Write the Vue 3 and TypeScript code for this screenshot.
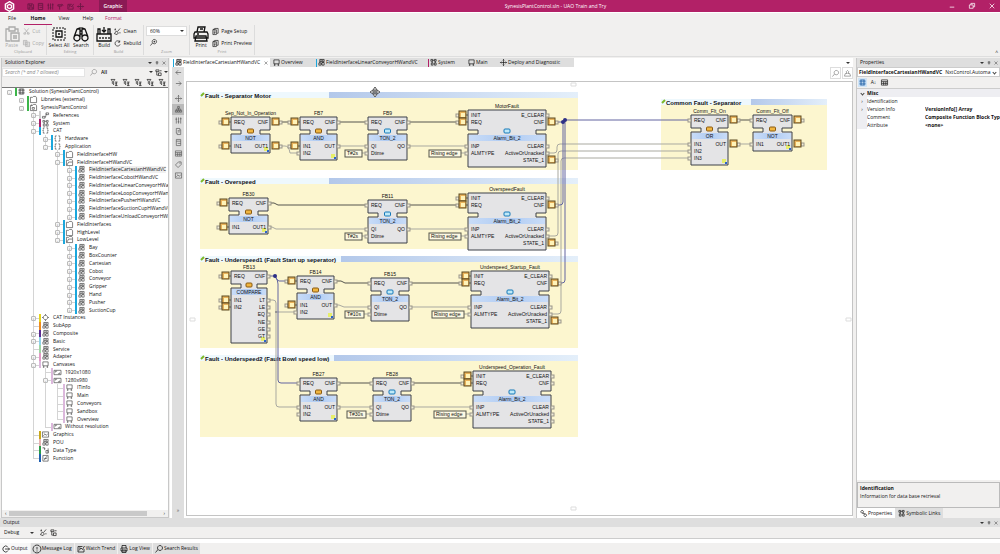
<script setup lang="ts">
import { h, ref } from 'vue'

const paths: Record<string, string> = {
  cut: 'M3 1l8 10M13 1L5 11M2 11h4v3H2zM10 11h4v3h-4z',
  copy: 'M1 1h8v10H1zM3 4h4M3 7h3M6 5h9v10H6zM8 9h5M8 12h5',
  broom: 'M14 1L8 8M5 7l5 4-3 4-6-2zM1 4h3M3 1v4M12 11h3',
  refresh: 'M13 4A6 6 0 1 0 14 10M13 1v4H9',
  zoom: 'M10 1a5 5 0 1 1-.1 0zM6 9l-5 6M8 6h4M10 4v4',
  search: 'M10 1a5 5 0 1 1-.1 0zM6 9l-5 6',
  page: 'M3 1h10v14H3zM3 5h10M6 10h7',
  pageSetup: 'M2 3h4V1h8v11h-3M2 4h8v11H2zM4 7h4M4 10h4M4 12h3',
  folder: 'M1 15V3h5l2-2h5l2 3v11z',
  folderOpen: 'M1 15V3h5l2-2h5l2 3v11zM2 14l4-7h8',
  solution: 'M3 2h10v12H3zM1 5h14M1 11h14M6 2v12M10 2v12',
  project: 'M1 15V3h5l2-2h5l2 3v11zM5 8h5v4H5zM4 1v4',
  link: 'M1 10h6v4H1zM9 2h6v4H9zM6 12c5 0 1-7 5-8',
  system: 'M2 1h4v4H2zM10 1h4v4h-4zM3 9h4v5H3zM10 9h4v5h-4zM6 3h4M5 5v4M12 5v4',
  cat: 'M6 2H3v4M10 2h3v4M3 10v4h3M13 10v4h-3M1 8h3M12 8h3',
  blocks: 'M4 1h10v5H4zM7 1v5M2 9h5v5H2zM9 8h5v6H9zM7 11h2M4 6v3M11 6v2M9 3h3',
  ring: 'M8 3a5 5 0 1 1-.1 0zM8 0v3M8 13v3M0 8h3M13 8h3',
  canvas: 'M2 2h12v9H2zM4 11v4M12 11v4M2 14h3M11 14h3',
  frame: 'M0 3h16v10H0zM3 5h4M3 5v3M13 11H9M13 11V8',
  image: 'M1 2h14v12H1zM3 11l4-4 3 3 3-4M4 5h2',
  data: 'M1 2h5v5M4 1l3 3M9 8h5v6H9zM14 3v11',
  func: 'M2 1h12v13H2zM5 12l5-8h2M5 8h6',
  left: 'M14 8H2M7 3L2 8l5 5',
  right: 'M2 8h12M9 3l5 5-5 5',
  move: 'M8 1v14M1 8h14M6 3l2-2 2 2M6 13l2 2 2-2M3 6L1 8l2 2M13 6l2 2-2 2',
  tree: 'M6 1h4v4H6zM1 10h4v4H1zM6 10h4v4H6zM11 10h4v4h-4zM8 5v5M3 10V7h10v3',
  sliders: 'M3 1v14M8 1v14M13 1v14M1 5h4M6 11h4M11 4h4',
  sheet: 'M3 1h8v3h2v11H5v-3H3zM6 6h5M6 9h5',
  table: 'M1 2h14v12H1zM1 6h14M6 6v8M11 6v8M1 10h14',
  tag: 'M8 2h6v6l-7 7-6-6zM10 5h2',
  pin: 'M5 2h6v6H5zM3 8h10M8 8v7',
  close: 'M2 2l12 12M14 2L2 14',
  minimize: 'M2 11h12',
  restore: 'M5 5V1h10v9h-4M1 5h10v9H1z',
  output: 'M11 3A6 6 0 1 0 11 13M6 8h9M12 5l3 3-3 3',
  alert: 'M8 0a8 8 0 1 1-.1 0zM8 4v5M8 11v2',
  watch: 'M2 3h9M2 3v11h12V8M4 11l4-5 3 3 4-7M4 6h3',
  print: 'M4 6V1h8v5M2 6h12v6H2zM4 10h8v5H4zM4 8h2',
  gears: 'M5 1a3 3 0 1 1-.1 0zM5 7l7 2M12 9a3 3 0 1 1-.1 0z',
  filter: 'M0 1h9L6 5v8L3 10V5zM9 7h6M9 11h5M9 15h6M12 7v8',
  gearlist: 'M2 2h7v4H2zM4 6v8h4M11 4h4M8 9h6v6H8z',
  save: 'M2 2h11l2 2v10H2zM5 2v4h6V2M5 14V9h7v5',
  hammer: 'M2 4h9v3H2zM6 7v8M11 2l3 4',
  person: 'M8 1l3 3-2 4h4l2 6H1l2-6h4L5 4z',
}

const Icon = (p: { name: string }) =>
  h('svg', { class: 'ico', viewBox: '0 0 16 16', 'aria-hidden': 'true' }, [h('path', { d: paths[p.name] })])
Icon.props = ['name']

interface Node { level: number; text: string; icon: string; color: string; exp: string }
type Row = [number, string, string, string, string]
const raw: Row[] = [
  [0, 'Solution  (SynesisPlantControl)', 'solution', '#3cb54a', '-'],
  [1, 'Libraries (external)', 'folder', '#3cb54a', '+'],
  [1, 'SynesisPlantControl', 'project', '#3cb54a', '-'],
  [2, 'References', 'link', '#cfcfcf', '+'],
  [2, 'System', 'system', '#a8246e', '+'],
  [2, 'CAT', 'cat', '#1ba7dc', '-'],
  [3, 'Hardware', 'cat', '#1ba7dc', '+'],
  [3, 'Application', 'cat', '#1ba7dc', '-'],
  [4, 'FieldInterfaceHW', 'folder', '#1ba7dc', '+'],
  [4, 'FieldInterfaceHWandVC', 'folderOpen', '#1ba7dc', '-'],
  ...['Cartesian', 'Cobot', 'LinearConveyor', 'LoopConveyor', 'Pusher', 'SuctionCup', 'UnloadConveyor'].map(
    (n): Row => [5, `FieldInterface${n}HWandVC`, 'blocks', '#1ba7dc', '+'],
  ),
  [4, 'FieldInterfaces', 'folder', '#1ba7dc', '+'],
  [4, 'HighLevel', 'folder', '#1ba7dc', '+'],
  [4, 'LowLevel', 'folderOpen', '#1ba7dc', '-'],
  ...['Bay', 'BoxCounter', 'Cartesian', 'Cobot', 'Conveyor', 'Gripper', 'Hand', 'Pusher', 'SuctionCup'].map(
    (n): Row => [5, n, 'blocks', '#1ba7dc', '+'],
  ),
  [2, 'CAT Instances', 'ring', '#e6d51e', '+'],
  [2, 'SubApp', 'blocks', '#ee8a1d', ''],
  [2, 'Composite', 'blocks', '#5a2a91', '+'],
  [2, 'Basic', 'blocks', '#8fd3ea', '+'],
  [2, 'Service', 'blocks', '#9fd6a4', ''],
  [2, 'Adapter', 'blocks', '#e39ac6', '+'],
  [2, 'Canvases', 'canvas', '#dcb8dc', '-'],
  [3, '1920x1080', 'frame', '#dcb8dc', ''],
  [3, '1280x980', 'frame', '#dcb8dc', '-'],
  ...['ITinfo', 'Main', 'Conveyors', 'Sandbox', 'Overview'].map((n): Row => [4, n, 'canvas', '#dcb8dc', '']),
  [3, 'Without resolution', 'frame', '#dcb8dc', ''],
  [2, 'Graphics', 'image', '#c9a818', ''],
  [2, 'POU', 'blocks', '#e8b4b4', ''],
  [2, 'Data Type', 'data', '#2a9d4a', ''],
  [2, 'Function', 'func', '#1f5fb0', ''],
]
const nodes: Node[] = raw.map(([level, text, icon, color, exp]) => ({ level, text, icon, color, exp }))
const continues = (i: number, k: number): boolean => {
  for (let j = i + 1; j < nodes.length; j++) {
    if (nodes[j].level < k) return false
    if (nodes[j].level === k) return true
  }
  return false
}

interface Block {
  name: string; type: string; x: number; w: number; y: number
  ev: [string, string][]; dt: [string, string][]
  pinL: string[]; pinR: string[]; kind: string
}
const simple: [string, string][] = [['REQ', 'CNF']]
const two: [string, string][] = [['INIT', 'E_CLEAR'], ['REQ', 'CNF']]
const alarm: [string, string][] = [['INP', 'CLEAR'], ['ALMTYPE', 'ActiveOrUnacked'], ['', 'STATE_1']]
const ton: [string, string][] = [['QI', 'QO'], ['Dtime', '']]
const not: [string, string][] = [['IN1', 'OUT1']]
const and: [string, string][] = [['IN1', 'OUT'], ['IN2', '']]
const b = (name: string, type: string, x: number, w: number, y: number, ev: [string, string][], dt: [string, string][], pinL: string[] = [], pinR: string[] = []): Block => ({
  name, type, x, w, y, ev, dt, pinL, pinR, kind: type === 'TON_2' || type === 'Alarm_Bit_2' ? 'blue' : 'gold',
})
const blocks: Block[] = [
  b('Sep_Not_In_Operation', 'NOT', 231, 39, 122, simple, not, ['REQ', 'IN1'], ['CNF', 'OUT1']),
  b('FB7', 'AND', 300, 37, 122, simple, and, ['REQ', 'IN1']),
  b('FB9', 'TON_2', 368, 39, 122, simple, ton),
  b('MotorFault', 'Alarm_Bit_2', 468, 78, 115, two, alarm, ['INIT', 'REQ'], ['CNF', 'STATE_1']),
  b('FB30', 'NOT', 229, 39, 203, simple, not, ['REQ', 'IN1']),
  b('FB11', 'TON_2', 368, 39, 205, simple, ton),
  b('OverspeedFault', 'Alarm_Bit_2', 468, 78, 198, two, alarm, ['INIT', 'REQ'], ['CNF', 'STATE_1']),
  b('FB13', 'COMPARE', 231, 36, 276, simple, [['IN1', 'LT'], ['IN2', 'LE'], ['', 'EQ'], ['', 'NE'], ['', 'GE'], ['', 'GT']], ['REQ', 'IN1', 'IN2']),
  b('FB14', 'AND', 297, 37, 281, simple, and, ['REQ', 'IN1']),
  b('FB15', 'TON_2', 371, 38, 283, simple, ton),
  b('Underspeed_Startup_Fault', 'Alarm_Bit_2', 471, 78, 276, two, alarm, ['INIT', 'REQ'], ['CNF', 'STATE_1']),
  b('FB27', 'AND', 300, 37, 383, simple, and),
  b('FB28', 'TON_2', 373, 38, 383, simple, ton),
  b('Underspeed_Operation_Fault', 'Alarm_Bit_2', 473, 78, 376, two, alarm, ['INIT', 'REQ']),
  b('Comm_Flt_On', 'OR', 691, 37, 120, simple, [['IN1', 'OUT'], ['IN2', ''], ['IN3', '']], [], ['CNF', 'OUT']),
  b('Comm_Flt_Off', 'NOT', 753, 39, 120, simple, not, [], ['CNF', 'OUT1']),
]
const step = (i: number) => Math.round((i * 36) / 5)
const lastEv = (k: Block) => k.y + step(k.ev.length - 1)
const bottom = (k: Block) => lastEv(k) + 31 + step(k.dt.length - 1)
const outline = (k: Block) => {
  const e = lastEv(k)
  const r = k.x + k.w
  return `M${k.x} ${k.y - 5}H${r}V${e + 8}H${r - 10}V${e + 12}H${r}V${bottom(k)}H${k.x}V${e + 12}H${k.x + 10}V${e + 8}H${k.x}Z`
}
const ports = (k: Block) => [
  ...k.ev.map((p, i) => ({ l: p[0], r: p[1], y: k.y + step(i) })),
  ...k.dt.map((p, i) => ({ l: p[0], r: p[1], y: lastEv(k) + 24 + step(i) })),
]

const groups = [
  { t: 'Fault - Separator Motor', x: 200, y: 92, w: 378, h: 78, s: 129 },
  { t: 'Fault - Overspeed', x: 200, y: 178, w: 378, h: 71, s: 129 },
  { t: 'Fault - Underspeed1 (Fault Start up seperator)', x: 200, y: 256, w: 378, h: 92, s: 141 },
  { t: 'Fault - Underspeed2 (Fault Bowl speed low)', x: 200, y: 355, w: 378, h: 82, s: 134 },
  { t: 'Common Fault - Separator', x: 661, y: 99, w: 166, h: 71, s: 90 },
]
const params = [
  { t: 'T#2s', x: 345, y: 153, w: 17, e: 368 }, { t: 'Rising edge', x: 429, y: 153, w: 32, e: 468 },
  { t: 'T#2s', x: 345, y: 236, w: 17, e: 368 }, { t: 'Rising edge', x: 429, y: 236, w: 32, e: 468 },
  { t: 'T#10s', x: 345, y: 314, w: 19, e: 371 }, { t: 'Rising edge', x: 432, y: 314, w: 32, e: 471 },
  { t: 'T#30s', x: 347, y: 414, w: 19, e: 373 }, { t: 'Rising edge', x: 434, y: 414, w: 32, e: 473 },
]
const dataWires = [
  'M280 146h5q4 0 5 7H300', 'M337 146H368', 'M407 146H468', 'M268 227h4l4 2H368', 'M407 229H468',
  'M267 300h6q3 0 3 3V404q0 3 3 3H300', 'M276 312H297', 'M334 305h5l5 2H371', 'M409 307H471', 'M337 407H373', 'M411 407H473',
  'M546 153h8q3 0 3-3v-3q0-3 3-3H691', 'M546 236h9q3 0 3-3V154q0-3 3-3H691', 'M549 314h9q3 0 3-3V161q0-3 3-3H691', 'M737 144H753',
]
const eventWires = ['M280 122H293', 'M337 122H368', 'M407 122H458', 'M268 203h6l4 2H368', 'M407 205H458', 'M334 281h7l4 2H371', 'M409 283H461', 'M337 383H373', 'M411 383H463', 'M737 120H753']
const busWires = ['M556 122h7l2-2H691', 'M556 205h4q3 0 3-3V122', 'M559 283h3q3 0 3-3V120', 'M267 276h8q2 5 4 5H287', 'M275 276q3 4 3 8V380q0 3 3 3H300']

const tabs = [
  { t: 'FieldInterfaceCartesianHWandVC', i: 'blocks', c: 'cyan', w: 'w-first' },
  { t: 'Overview', i: 'canvas', c: '', w: 'w-over' },
  { t: 'FieldInterfaceLinearConveyorHWandVC', i: 'blocks', c: 'cyan', w: 'w-linear' },
  { t: 'System', i: 'system', c: 'pink', w: 'w-sys' },
  { t: 'Main', i: 'canvas', c: '', w: 'w-main' },
  { t: 'Deploy and Diagnostic', i: 'move', c: '', w: 'w-deploy' },
]
const strip = ['left', 'right', 'move', 'tree', 'sliders', 'sheet', 'page', 'table', 'tag', 'image']
const props = [
  { n: 'Identification', v: '', x: true }, { n: 'Version Info', v: 'VersionInfo[] Array', x: true },
  { n: 'Comment', v: 'Composite Function Block Type', x: false }, { n: 'Attribute', v: '<none>', x: false },
]
const outTabs = [
  { t: 'Output', i: 'output' }, { t: 'Message Log', i: 'alert' }, { t: 'Watch Trend', i: 'watch' },
  { t: 'Log View', i: 'print' }, { t: 'Search Results', i: 'search' },
]
const activeTab = ref(0)
const activeOut = ref(0)
</script>

<template>
  <div class="app">
    <header class="title">
      <svg class="logo" viewBox="0 0 16 16"><path d="M8 1l6 3.500v7L8 15l-6-3.500v-7zM8 5l3 1.500v3L8 11 5 9.500v-3z" /></svg>
      <div class="quick">
        <button v-for="n in ['save', 'page', 'sliders', 'hammer', 'watch', 'move']" :key="n" :aria-label="n"><Icon :name="n" /></button>
      </div>
      <span class="ctx">Graphic</span>
      <span class="caption">SynesisPlantControl.sln - UAO Train and Try</span>
      <div class="win">
        <button v-for="n in ['minimize', 'restore', 'close']" :key="n" :aria-label="n"><Icon :name="n" /></button>
      </div>
    </header>

    <nav class="menu">
      <button>File</button><button class="on">Home</button><button>View</button><button>Help</button><button class="fmt">Format</button>
    </nav>

    <section class="ribbon">
      <div class="grp g1">
        <div class="body">
          <button class="big dim">
            <svg viewBox="0 0 16 16"><path d="M5 3H2v12h4M11 3h3v3M5 1h6v4H5zM7 7h8v8H7zM9 10h4M9 12h4" /></svg>Paste
          </button>
          <div class="col">
            <button class="sm dim"><Icon name="cut" />Cut</button><button class="sm dim"><Icon name="copy" />Copy</button>
          </div>
        </div>
        <span class="cap">Clipboard</span>
      </div>
      <div class="grp g2">
        <div class="body">
          <button class="big">
            <svg viewBox="0 0 16 16"><path class="dots" d="M2 2h12v12H2z" /><path d="M5 5h6v6H5zM7 8h2" /></svg>Select All
          </button>
          <button class="big">
            <svg viewBox="0 0 16 16"><path d="M4 9a3 3 0 1 1-.1 0zM12 9a3 3 0 1 1-.1 0zM1 11l3-8 3-1v9M15 11l-3-8-3-1v9M7 5h2M7 8h2M4 3h3M9 3h3" /></svg>Search
          </button>
        </div>
        <span class="cap">Editing</span>
      </div>
      <div class="grp g3">
        <div class="body">
          <button class="big">
            <svg viewBox="0 0 16 16"><path d="M1 15V8h14v7zM4 11v2M7 11v2M10 11v2M13 11v2M8 1v5M6 4l2 2 2-2M2 8V3h2v5M12 8V3h2v5" /></svg>Build
          </button>
          <div class="col">
            <button class="sm"><Icon name="broom" />Clean</button><button class="sm"><Icon name="refresh" />Rebuild</button>
          </div>
        </div>
        <span class="cap">Build</span>
      </div>
      <div class="grp g4">
        <div class="body zoomcol">
          <span class="pick"><select aria-label="Zoom level"><option>60%</option></select><i class="dd" /></span>
          <button class="sm" aria-label="Zoom"><Icon name="zoom" /></button>
        </div>
        <span class="cap">Zoom</span>
      </div>
      <div class="grp g5">
        <div class="body">
          <button class="big">
            <svg viewBox="0 0 16 16"><path d="M4 6l1-5h7l-1 5M2 6h12l1 2v4H1V8zM3 10h10l1 5H2zM4 8h2M7 3h3" /></svg>Print
          </button>
          <div class="col">
            <button class="sm"><Icon name="pageSetup" />Page Setup</button><button class="sm"><Icon name="pageSetup" />Print Preview</button>
          </div>
        </div>
        <span class="cap">Print</span>
      </div>
      <span class="collapse">^</span>
    </section>

    <main class="work">
      <aside class="explorer">
        <h2 class="phead">Solution Explorer<span class="pbtn"><i class="dd" /><Icon name="pin" /><Icon name="close" /></span></h2>
        <div class="srow">
          <input type="search" placeholder="Search (* and ? allowed)" aria-label="Search solution">
          <Icon name="search" />
          <span class="pick all"><select aria-label="Filter"><option>All</option></select><i class="dd" /></span>
          <button aria-label="Options"><Icon name="gearlist" /></button><i class="dd" />
        </div>
        <div class="frow"><button v-for="n in 5" :key="n" :aria-label="'Filter ' + n"><Icon name="filter" /></button></div>
        <div class="treebox">
          <ul class="tree">
            <li v-for="(n, i) in nodes" :key="i">
              <span v-for="k in n.level" :key="k" class="cell" :class="{ line: k > 2 && continues(i, k - 1) }" />
              <span class="cell own" :class="{ line: n.level > 1, end: !continues(i, n.level) }"><b v-if="n.exp" class="exp">{{ n.exp }}</b></span>
              <span class="bar" :style="{ background: n.color }" />
              <Icon :name="n.icon" />
              <span class="lbl" :class="{ sel: i === 10 }">{{ n.text }}</span>
            </li>
          </ul>
          <div class="hbar"><span>‹</span><i /><span>›</span></div>
        </div>
      </aside>

      <section class="editor">
        <div class="tabs">
          <button v-for="(t, i) in tabs" :key="t.t" class="tab" :class="[t.w, { on: activeTab === i }]" @click="activeTab = i">
            <span v-if="t.c" class="mark" :class="t.c" /><Icon :name="t.i" /><span>{{ t.t }}</span><Icon v-if="i === 0" name="close" />
          </button>
          <i class="dd" />
        </div>
        <div class="area">
          <div class="strip">
            <button v-for="(n, i) in strip" :key="n" :class="{ on: i === 3, gap: i === 2 }" :aria-label="n"><Icon :name="n" /></button>
            <span class="more">»</span>
          </div>
          <div class="sheet">
            <div class="sheettools"><button aria-label="Find"><Icon name="search" /></button><button aria-label="User"><Icon name="person" /></button></div>
            <svg class="canvas">
              <defs>
                <linearGradient id="bar"><stop offset="0" stop-color="#b3c8ea" /><stop offset="1" stop-color="#e4effa" /></linearGradient>
                <linearGradient id="band"><stop offset="0" stop-color="#c8dcf8" /><stop offset="0.5" stop-color="#b0cbf2" /><stop offset="1" stop-color="#c8dcf8" /></linearGradient>
              </defs>
              <g transform="translate(-187 -82)">
                <g v-for="g in groups" :key="g.t">
                  <rect :x="g.x" :y="g.y + 6" :width="g.w" :height="g.h - 6" class="yellow" />
                  <rect :x="g.x" :y="g.y" :width="g.s" height="6" class="pale" />
                  <rect :x="g.x + g.s" :y="g.y" :width="g.w - g.s" height="6" fill="url(#bar)" />
                  <path :d="`M${g.x + 1} ${g.y + 4}l3-3`" class="tick" />
                  <text :x="g.x + 5" :y="g.y + 6" class="gt">{{ g.t }}</text>
                </g>
                <path v-for="d in dataWires" :key="d" :d="d" class="wd" />
                <path v-for="d in eventWires" :key="d" :d="d" class="we" />
                <path v-for="d in busWires" :key="d" :d="d" class="wb" />
                <circle cx="565" cy="120" r="2" class="dot" /><circle cx="563" cy="122" r="2" class="dot" /><circle cx="275" cy="276" r="2" class="dot" />
                <circle cx="276" cy="312" r="1" class="gdot" />
                <g v-for="k in blocks" :key="k.name">
                  <path :d="outline(k)" class="blk" />
                  <rect :x="k.x + 1" :y="lastEv(k) + 13" :width="k.w - 2" height="6" fill="url(#band)" />
                  <rect :x="k.x + k.w / 2 - 3" :y="lastEv(k) + 7" width="6" height="4" rx="1" :class="k.kind" />
                  <text :x="k.x + k.w / 2" :y="k.y - 7" class="mid">{{ k.name }}</text>
                  <text :x="k.x + k.w / 2" :y="lastEv(k) + 18" class="mid">{{ k.type }}</text>
                  <g v-if="k.kind === 'gold'">
                    <path :d="`M${k.x + k.w - 6} ${bottom(k) - 6}h4v4h-4z`" class="cornery" />
                    <path :d="`M${k.x + k.w - 3} ${bottom(k) - 2}h2`" class="cornerb" />
                  </g>
                  <template v-for="p in ports(k)" :key="p.y">
                    <g v-if="p.l">
                      <rect v-if="!k.pinL.includes(p.l)" :x="k.x - 3" :y="p.y - 1" width="3" height="3" class="port" />
                      <text :x="k.x + 3" :y="p.y + 2">{{ p.l }}</text>
                      <g v-if="k.pinL.includes(p.l)">
                        <rect :x="k.x - 12" :y="p.y - 1" width="3" height="3" class="port" />
                        <rect :x="k.x - 9" :y="p.y - 4" width="7" height="7" class="pin" /><rect :x="k.x - 7" :y="p.y - 2" width="4" height="4" class="pinin" />
                        <path :d="`M${k.x - 2} ${p.y}h2`" class="we" />
                      </g>
                    </g>
                    <g v-if="p.r">
                      <rect v-if="!k.pinR.includes(p.r)" :x="k.x + k.w" :y="p.y - 1" width="3" height="3" class="port" />
                      <text :x="k.x + k.w - 2" :y="p.y + 2" class="end">{{ p.r }}</text>
                      <g v-if="k.pinR.includes(p.r)">
                        <rect :x="k.x + k.w + 9" :y="p.y - 1" width="3" height="3" class="port" />
                        <rect :x="k.x + k.w + 2" :y="p.y - 4" width="7" height="7" class="pin" /><rect :x="k.x + k.w + 4" :y="p.y - 2" width="4" height="4" class="pinin" />
                      </g>
                    </g>
                  </template>
                </g>
                <g v-for="p in params" :key="p.x + '-' + p.y">
                  <path :d="`M${p.x + p.w} ${p.y}H${p.e - 3}`" class="wd" />
                  <rect :x="p.x" :y="p.y - 3" :width="p.w" height="7" class="param" />
                  <text :x="p.x + 2" :y="p.y + 2">{{ p.t }}</text>
                </g>
                <path d="M375 87l2 3h-4zM375 97l2-3h-4zM370 92l3-2v4zM380 92l-3-2v4zM374 91h2v2h-2z" class="cursor" />
                <path d="M190 318h5v3h-5zM571 507h5v3h-5zM571 83h5v3h-5zM846 318h5v3h-5z" class="handle" />
              </g>
            </svg>
          </div>
        </div>
      </section>

      <aside class="properties">
        <h2 class="phead">Properties<span class="pbtn"><i class="dd" /><Icon name="pin" /><Icon name="close" /></span></h2>
        <button class="object"><b>FieldInterfaceCartesianHWandVC</b><span>NxtControl.Automa</span><i class="chev" /></button>
        <div class="ptools"><button class="on" aria-label="Categorized"><Icon name="solution" /></button><button aria-label="Sort">A↓</button><button aria-label="Pages"><Icon name="table" /></button></div>
        <div class="pbody">
          <table class="pgrid">
            <colgroup><col class="c1"><col class="c2"><col></colgroup>
            <tbody>
              <tr class="cat"><th><i class="chev" /></th><td colspan="2">Misc</td></tr>
              <tr v-for="p in props" :key="p.n"><th><span v-if="p.x">›</span></th><td>{{ p.n }}</td><td class="pv">{{ p.v }}</td></tr>
            </tbody>
          </table>
        </div>
        <div class="desc"><b>Identification</b><span>Information for data base retrieval</span></div>
        <div class="btabs"><button class="on"><Icon name="gears" />Properties</button><button><Icon name="system" />Symbolic Links</button></div>
      </aside>
    </main>

    <footer class="output">
      <h2 class="phead">Output<span class="pbtn"><i class="dd" /><Icon name="pin" /><Icon name="close" /></span></h2>
      <div class="otools">
        <span class="pick src"><select aria-label="Output source"><option>Debug</option></select><i class="dd" /></span>
        <button aria-label="Clear"><Icon name="broom" /></button><button aria-label="Wrap"><Icon name="gearlist" /></button>
      </div>
      <div class="olog" />
      <div class="otabs">
        <button v-for="(t, i) in outTabs" :key="t.t" :class="{ on: activeOut === i }" @click="activeOut = i"><Icon :name="t.i" />{{ t.t }}</button>
      </div>
    </footer>
  </div>
</template>

<style>
body { background: #f1f0ef; overflow: hidden; }
</style>

<style scoped>
.app { display: flex; flex-direction: column; height: 100vh; font: 5px/7px "Open Sans", "Noto Sans", sans-serif; color: #111; background: #f1f0ef; }
.app * { box-sizing: border-box; }
button, select, input { font: inherit; color: inherit; border: 0; background: none; padding: 0; margin: 0; border-radius: 0; appearance: none; min-width: 0; }
button { display: flex; align-items: center; white-space: nowrap; }
.ico { width: 7px; height: 7px; flex: none; fill: none; stroke: currentColor; stroke-width: 1.500; overflow: visible; }
.dd { border: 2px solid transparent; border-top-color: #333; border-bottom: 0; width: 0; height: 0; flex: none; }
.chev { width: 3px; height: 3px; border: solid #444; border-width: 0 1px 1px 0; transform: rotate(45deg); flex: none; display: inline-block; }
.pick { display: flex; align-items: center; }
.pick select { flex: 1; }

.title { height: 12px; flex: none; background: #b22167; color: #fff; display: grid; grid-template-columns: 24px 75px 28px 1fr 60px; align-items: center; }
.logo { width: 11px; height: 11px; margin-left: 4px; fill: none; stroke: #fff; stroke-width: 2; }
.quick { display: flex; gap: 3px; padding-left: 3px; color: #6b1745; }
.quick .ico { stroke-width: 2; }
.ctx { background: #8b1a55; height: 12px; line-height: 12px; text-align: center; font-weight: 600; }
.caption { text-align: center; padding-left: 44px; line-height: 12px; }
.win { display: flex; justify-content: space-between; padding: 0 5px 0 9px; }
.win .ico { width: 6px; height: 6px; stroke-width: 2; }

.menu { height: 13px; flex: none; display: flex; border-top: 1px solid #fff; }
.menu button { width: 24px; justify-content: center; border-bottom: 1px solid transparent; }
.menu .on { font-weight: 700; border-color: #b22167; width: 28px; }
.menu .fmt { color: #b22167; width: 27px; }

.ribbon { height: 32px; flex: none; display: flex; border-bottom: 1px solid #dedede; }
.grp { display: flex; flex-direction: column; border-right: 1px solid #dcdcdc; height: 30px; }
.g1 { width: 47px; } .g2 { width: 47px; } .g3 { width: 50px; } .g4 { width: 46px; } .g5 { width: 65px; }
.body { display: flex; flex: 1; padding: 1px 2px 0; gap: 2px; min-height: 0; }
.cap { text-align: center; color: #999; font-size: 4px; line-height: 6px; }
.big { flex-direction: column; flex: 1; }
.big svg { width: 16px; height: 16px; fill: none; stroke: #111; stroke-width: 1.300; }
.big .dots { stroke-dasharray: 2 1; stroke-width: 1; }
.dim { color: #aaa; }
.dim svg { stroke: #aaa; }
.col { display: flex; flex-direction: column; justify-content: space-around; flex: 1; }
.sm { gap: 2px; }
.zoomcol { flex-direction: column; padding: 1px 2px; gap: 3px; }
.zoomcol .pick { background: #fff; border: 1px solid #ddd; height: 10px; padding: 0 2px 0 3px; width: 41px; }
.zoomcol .sm { margin-left: 4px; }
.collapse { margin-left: auto; align-self: flex-end; padding-right: 2px; }

.work { flex: 1; display: flex; min-height: 0; padding-top: 1px; }
.phead { height: 9px; flex: none; background: #dedede; margin: 0; font-weight: 400; font-size: 5px; line-height: 9px; padding: 0 2px 0 3px; display: flex; justify-content: space-between; }
.pbtn { display: flex; align-items: center; gap: 3px; }
.pbtn .ico { width: 4px; height: 4px; }
.explorer { width: 168px; margin-left: 1px; display: flex; flex-direction: column; border: 1px solid #c8c8c8; border-top: 0; }
.srow { display: flex; height: 10px; align-items: center; gap: 2px; }
.srow input { flex: 1; background: #fff; height: 9px; font-style: italic; padding-left: 2px; border: 1px solid #e4e4e4; }
.srow input::placeholder { color: #888; }
.srow > .ico { color: #888; margin-left: 3px; }
.all { width: 54px; font-weight: 600; padding-left: 2px; }
.frow { display: flex; height: 10px; justify-content: flex-end; gap: 5px; padding-right: 2px; align-items: center; }
.treebox { flex: 1; background: #fff; border-top: 1px solid #777; min-height: 0; display: flex; flex-direction: column; justify-content: space-between; }
.tree { list-style: none; margin: 0; padding: 0 0 0 1px; height: 374px; display: grid; grid-auto-rows: minmax(0, 1fr); overflow: hidden; }
.tree li { display: flex; align-items: center; white-space: nowrap; }
.cell { width: 12px; align-self: stretch; position: relative; flex: none; }
.line::before { content: ""; position: absolute; left: 6px; top: 0; bottom: 0; border-left: 1px solid #d4d4d4; }
.own.end::before { bottom: 50%; }
.own.line::after { content: ""; position: absolute; left: 6px; right: 0; top: 50%; border-top: 1px solid #d4d4d4; }
.exp { position: absolute; z-index: 1; left: 4px; top: 2px; width: 5px; height: 5px; background: #f4f4f4; border: 1px solid #bbb; border-radius: 1px; font-size: 4px; line-height: 3px; text-align: center; font-weight: 400; color: #444; }
.bar { width: 2px; align-self: stretch; flex: none; }
.tree .ico { margin: 0 4px 0 1px; color: #444; }
.tree .sel { background: #f0f0f0; }
.hbar { display: flex; height: 7px; background: #f1f0ef; align-items: center; justify-content: space-between; padding: 0 3px; }
.hbar i { background: #c9c9c9; height: 5px; flex: 1; margin: 0 16px 0 2px; }

.editor { flex: 1; min-width: 0; display: flex; flex-direction: column; padding-left: 2px; background: #fff; border-left: 1px solid #f1f0ef; }
.tabs { display: flex; height: 9px; flex: none; align-items: center; padding-right: 3px; }
.tabs > .dd { margin-left: auto; }
.tab { background: #dedede; height: 9px; gap: 1px; padding-left: 3px; overflow: hidden; }
.tab.on { background: #fff; }
.tab .ico:last-child { width: 4px; height: 4px; margin-left: 3px; }
.mark { width: 1px; height: 8px; flex: none; } .cyan { background: #1ba7dc; } .pink { background: #b22167; }
.w-first { width: 98px; padding-left: 1px; } .w-over { width: 43px; } .w-linear { width: 112px; } .w-sys { width: 40px; } .w-main { width: 32px; } .w-deploy { width: 77px; }
.area { flex: 1; display: flex; min-height: 0; }
.strip { width: 12px; background: #dedede; display: flex; flex-direction: column; color: #555; }
.strip button { height: 11px; justify-content: center; flex: none; }
.strip .on { background: #bbb; }
.strip .gap { margin-top: 4px; }
.more { margin-top: auto; text-align: center; padding-bottom: 4px; }
.sheet { flex: 1; min-width: 0; display: flex; flex-direction: column; padding: 0 0 2px 2px; }
.sheettools { height: 14px; flex: none; display: flex; justify-content: flex-end; gap: 1px; }
.sheettools button { width: 11px; height: 12px; border: 1px solid #ddd; justify-content: center; color: #777; }
.canvas { flex: 1; width: 100%; min-height: 0; border: 1px solid #c4c4c4; font: 5px "Liberation Sans", Arial, sans-serif; fill: #111; }
.yellow { fill: #fcf6cf; } .pale { fill: #eef8fd; }
.tick { stroke: #7db928; stroke-width: 2; }
.gt { font-size: 6px; font-weight: 700; }
.mid { text-anchor: middle; } .end { text-anchor: end; }
.wd, .we, .wb { fill: none; stroke: #a9a9a0; stroke-width: 1; }
.we { stroke: #55554e; } .wb { stroke: #6265a0; }
.dot { fill: #2c2f86; } .gdot { fill: #888; }
.blk { fill: #e4e4e6; stroke: #3c4048; stroke-width: 1; }
.gold { fill: #f0b540; stroke: #8a5a10; } .blue { fill: #bfe9f8; stroke: #1478b8; }
.cornery { fill: #e6ee6a; } .cornerb { stroke: #2d66c8; stroke-width: 2; }
.port { fill: #f2eed8; stroke: #99958a; }
.pin { fill: #e9b25a; stroke: #5d4a22; } .pinin { fill: #fff3b8; }
.param { fill: #fdf9e2; stroke: #55554a; }
.cursor { fill: #fff; stroke: #555; } .handle { fill: none; stroke: #ddd; }

.properties { width: 144px; display: flex; flex-direction: column; border-left: 1px solid #c8c8c8; margin-left: 3px; }
.object { height: 10px; flex: none; background: #fff; border: 1px solid #ccc; padding: 0 4px 0 1px; gap: 3px; overflow: hidden; }
.object .chev { margin-left: auto; }
.ptools { height: 11px; flex: none; display: flex; align-items: center; gap: 2px; padding-left: 1px; }
.ptools button { width: 9px; height: 9px; justify-content: center; }
.ptools .on { background: #cfe4f7; color: #2563a8; }
.pbody { flex: 1; min-height: 0; background: #fff; border-top: 1px solid #ccc; margin-bottom: 2px; }
.pgrid { width: 100%; border-collapse: collapse; table-layout: fixed; }
.c1 { width: 10px; } .c2 { width: 58px; }
.pgrid tr { height: 8px; }
.pgrid th, .pgrid td { padding: 0; line-height: 8px; white-space: nowrap; overflow: hidden; }
.pgrid th { background: #eeeef2; font-weight: 400; }
.pgrid .cat td { background: #eeeef2; font-weight: 700; }
.pgrid .pv { font-weight: 700; }
.desc { height: 26px; flex: none; border: 1px solid #bbb; display: flex; flex-direction: column; padding: 1px 2px; line-height: 8px; }
.btabs { display: flex; height: 10px; flex: none; }
.btabs button { background: #dedede; padding: 0 3px; gap: 1px; }
.btabs .on { background: #fff; }

.output { height: 36px; flex: none; display: flex; flex-direction: column; }
.otools { height: 11px; display: flex; align-items: center; gap: 3px; padding-left: 4px; }
.src { width: 30px; margin-right: 3px; }
.olog { height: 5px; background: #fff; border-top: 1px solid #ccc; }
.otabs { flex: 1; display: flex; gap: 1px; background: #f1f0ef; }
.otabs button { background: #dedede; padding: 0 2px; gap: 1px; }
.otabs .on { background: #f8f8f8; }
.otabs .ico { width: 8px; height: 8px; }
</style>
